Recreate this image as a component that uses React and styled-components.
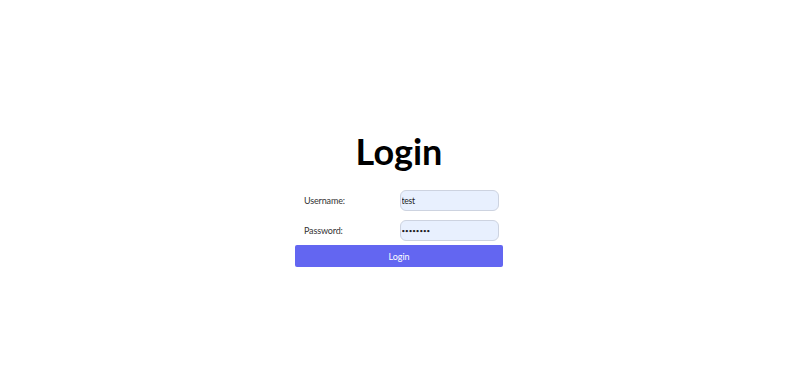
import React from "react"
import styled, { createGlobalStyle } from "styled-components"

const GlobalStyle = createGlobalStyle`
  html, body {
    margin: 0;
    padding: 0;
    background: #ffffff;
  }
  body {
    font-family: Lato, "Noto Sans", sans-serif;
    color: #111111;
  }
`

const Page = styled.main`
  width: 798px;
  height: 387px;
  padding-top: 6px;
  box-sizing: border-box;
  display: flex;
  flex-direction: column;
  align-items: center;
  justify-content: center;
`

const Title = styled.h1`
  margin: 0 0 14px;
  font-size: 36px;
  font-weight: 700;
  line-height: 50px;
  color: #000000;
`

const Form = styled.form`
  width: 208px;
  display: flex;
  flex-direction: column;
`

const Row = styled.div`
  display: grid;
  grid-template-columns: 96px 99px;
  align-items: center;
  padding-left: 9px;
  margin-bottom: ${(p) => p.gap || 9}px;
`

const Label = styled.label`
  font-size: 9px;
  letter-spacing: -0.15px;
  color: #333333;
`

const Input = styled.input`
  box-sizing: border-box;
  width: 99px;
  height: 21px;
  padding: 0 0 0 0.5px;
  border: 1px solid #cdd3e0;
  border-radius: 6px;
  background: #e8f0fe;
  font-family: inherit;
  font-size: ${(p) => (p.type === "password" ? 6.2 : 8.5)}px;
  letter-spacing: ${(p) => (p.type === "password" ? 0 : -0.2)}px;
  color: #222222;
  outline: none;
`

const Button = styled.button`
  box-sizing: border-box;
  width: 208px;
  height: 22px;
  border: none;
  border-radius: 2px;
  background: #6366f1;
  color: #ffffff;
  font-family: inherit;
  font-size: 9px;
  cursor: pointer;
`

export default function App() {
  return (
    <>
      <GlobalStyle />
      <Page>
        <Title>Login</Title>
        <Form onSubmit={(e) => e.preventDefault()}>
          <Row>
            <Label htmlFor="username">Username:</Label>
            <Input id="username" type="text" defaultValue="test" />
          </Row>
          <Row gap={4}>
            <Label htmlFor="password">Password:</Label>
            <Input id="password" type="password" defaultValue="password" />
          </Row>
          <Button type="submit">Login</Button>
        </Form>
      </Page>
    </>
  )
}
